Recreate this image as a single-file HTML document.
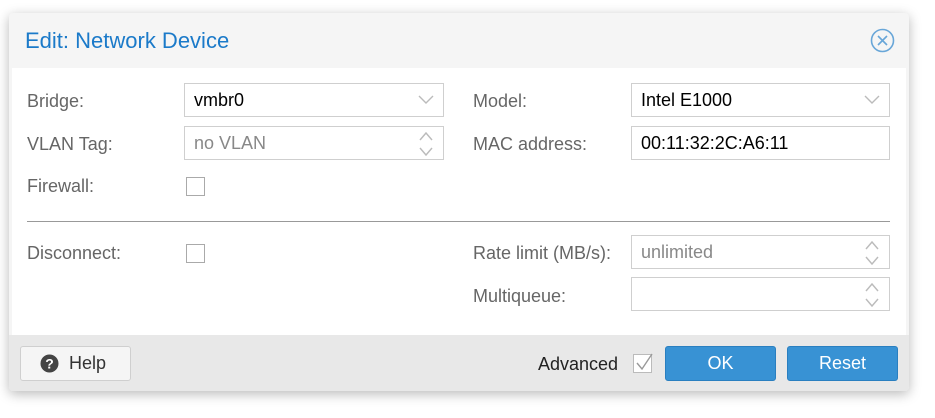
<!DOCTYPE html>
<html><head><style>
body{margin:0;width:935px;height:418px;background:#fff;font-family:"Liberation Sans",sans-serif;position:relative;overflow:hidden}
.dlg{position:absolute;left:9px;top:13px;width:900px;height:378px;background:#f5f5f5;border-radius:4px;box-shadow:0 3px 12px rgba(0,0,0,.28)}
.body{position:absolute;left:3px;top:55px;width:894px;height:267px;background:#fff}
.foot{position:absolute;left:0;top:322px;width:900px;height:56px;background:#e8e8e8;border-radius:0 0 4px 4px}
.a{position:absolute}
.t{position:absolute;font-size:18px;color:#666;line-height:20px}
.f{position:absolute;border:1px solid #cfcfcf;background:#fff;box-sizing:border-box;height:34px;font-size:18px;line-height:32px;padding-left:9px;color:#000}
.cb{position:absolute;width:19px;height:19px;border:1px solid #aaa;box-sizing:border-box;background:#fff}
.btn{position:absolute;top:346px;height:35px;box-sizing:border-box;border-radius:3px;font-size:18px;line-height:33px;text-align:center}
.blue{background:#3892d4;border:1px solid #2a7fc0;color:#fff;width:111px}
</style></head><body>
<div class="dlg"><div class="body"></div><div class="foot"></div></div>
<div class="t" style="left:25px;top:29px;color:#1b7ac9;font-size:22px;line-height:24px">Edit: Network Device</div>
<svg class="a" style="left:870px;top:28px" width="25" height="25" viewBox="0 0 25 25"><circle cx="12.5" cy="12.5" r="11" fill="none" stroke="#68a6d8" stroke-width="1.6"/><path d="M8 8L17 17M17 8L8 17" stroke="#68a6d8" stroke-width="1.6"/></svg>

<div class="t" style="left:27px;top:91px">Bridge:</div>
<div class="f" style="left:184px;top:83px;width:260px">vmbr0</div>
<div class="t" style="left:27px;top:134px">VLAN Tag:</div>
<div class="f" style="left:184px;top:126px;width:260px;color:#888">no VLAN</div>
<div class="t" style="left:27px;top:176px">Firewall:</div>
<div class="cb" style="left:186px;top:177px"></div>

<div class="t" style="left:473px;top:91px">Model:</div>
<div class="f" style="left:631px;top:83px;width:259px">Intel E1000</div>
<div class="t" style="left:473px;top:134px">MAC address:</div>
<div class="f" style="left:631px;top:126px;width:259px">00:11:32:2C:A6:11</div>

<div class="a" style="left:27px;top:221px;width:863px;height:1px;background:#999"></div>

<div class="t" style="left:27px;top:243px">Disconnect:</div>
<div class="cb" style="left:186px;top:244px"></div>
<div class="t" style="left:473px;top:243px">Rate limit (MB/s):</div>
<div class="f" style="left:631px;top:235px;width:259px;color:#888">unlimited</div>
<div class="t" style="left:473px;top:286px">Multiqueue:</div>
<div class="f" style="left:631px;top:277px;width:259px"></div>

<svg class="a" style="left:0;top:0" width="935" height="418">
<g fill="none" stroke="#bbb" stroke-width="1.4">
<path d="M419 96L426 103L433 96"/><path d="M865 96L872 103L879 96"/>
<path d="M420 140L426 133L432 140M420 148L426 155L432 148"/>
<path d="M866 249L872 242L878 249M866 257L872 264L878 257"/>
<path d="M866 291L872 284L878 291M866 299L872 306L878 299"/>
</g></svg>

<div class="btn" style="left:20px;width:111px;background:#f5f5f5;border:1px solid #cfcfcf;color:#333;text-align:left;padding-left:48px">Help</div>
<svg class="a" style="left:40px;top:354px" width="19" height="19" viewBox="0 0 19 19"><circle cx="9.5" cy="9.5" r="9" fill="#444"/><text x="9.5" y="14.5" font-size="14" font-weight="bold" text-anchor="middle" fill="#fff" font-family="Liberation Sans">?</text></svg>
<div class="t" style="left:538px;top:354px;color:#222">Advanced</div>
<div class="cb" style="left:633px;top:354px;border-color:#bbb"></div>
<svg class="a" style="left:633px;top:351px" width="22" height="22"><path d="M4 12L9 18L19 3" fill="none" stroke="#999" stroke-width="1.4"/></svg>
<div class="btn blue" style="left:665px">OK</div>
<div class="btn blue" style="left:787px">Reset</div>
</body></html>
